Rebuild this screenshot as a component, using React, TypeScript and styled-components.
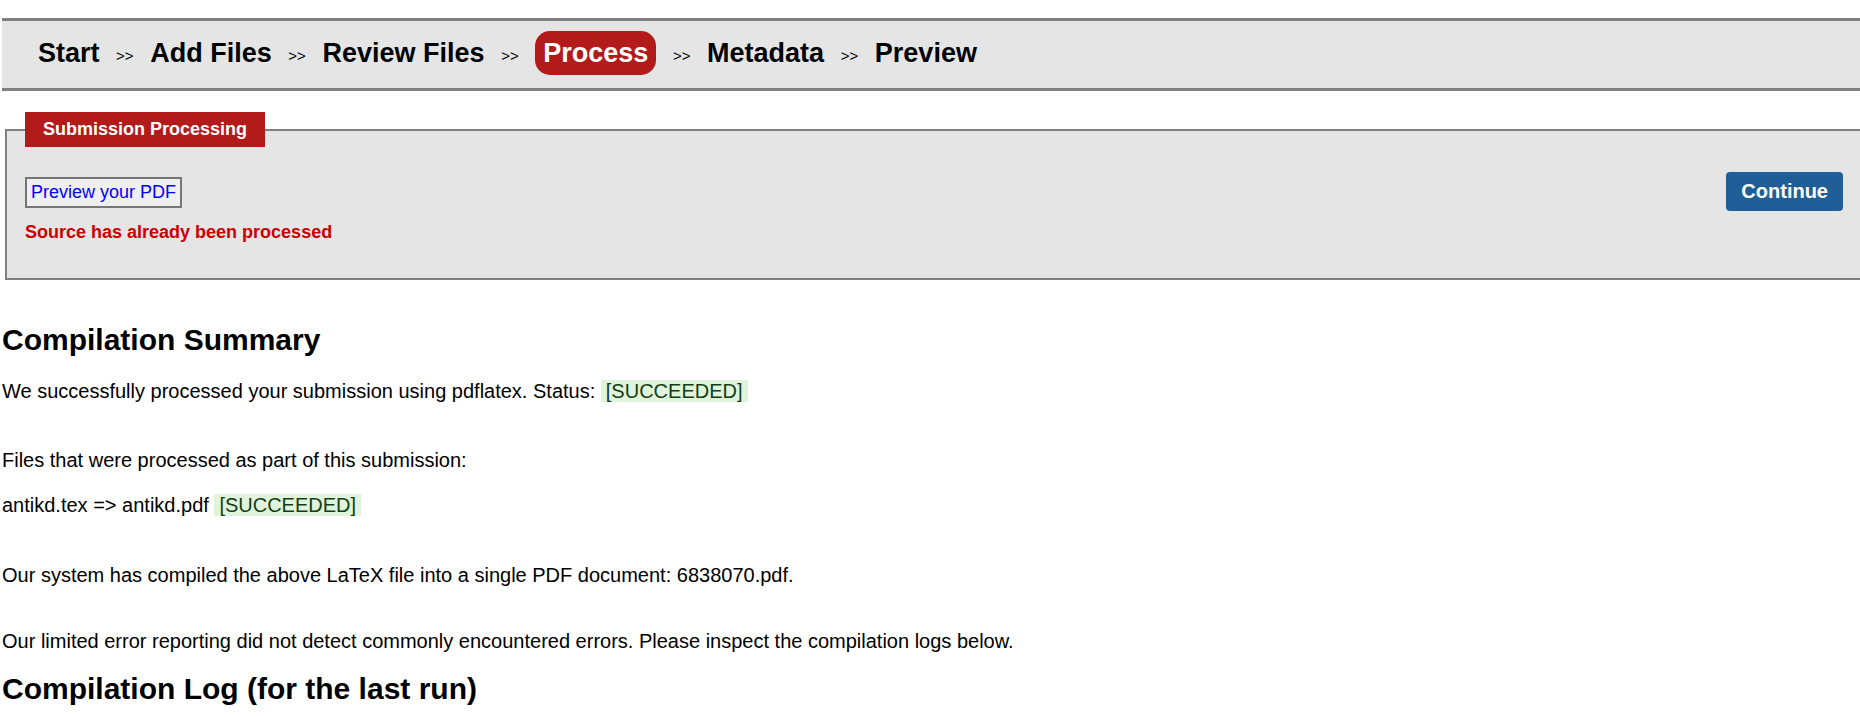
import React from "react";
import styled, { createGlobalStyle, css } from "styled-components";

const GlobalStyle = createGlobalStyle`
  html, body {
    margin: 0;
    padding: 0;
    background: #ffffff;
  }
  body {
    overflow-x: hidden;
    font-family: "Liberation Sans", Arial, sans-serif;
    color: #000000;
  }
  * { box-sizing: border-box; }
`;

const Page = styled.div`
  padding-top: 18px;
  display: flex;
  flex-direction: column;
`;

const Nav = styled.nav`
  margin: 0 -6px 0 2px;
  background: #e5e5e5;
  border-top: 3px solid #808080;
  border-bottom: 3px solid #808080;
  height: 73px;
  padding: 0 0 3px 36px;
  display: flex;
  align-items: center;
  gap: 16.6px;
`;

const NavStep = styled.span<{ $active?: boolean }>`
  font-size: 27px;
  font-weight: bold;
  line-height: 30px;
  color: #000000;
  ${(p) =>
    p.$active &&
    css`
      background: #b31b1b;
      color: #ffffff;
      border-radius: 15px;
      padding: 7px 8px;
    `}
`;

const NavSep = styled.span`
  font-size: 15px;
  line-height: 18px;
  padding-top: 6px;
  color: #000000;
`;

const Panel = styled.fieldset`
  margin: 21px -6px 0 5px;
  background: #e5e5e5;
  border: 2px solid #808080;
  padding: 0 21px 35px 18px;
  min-width: 0;
`;

const PanelLegend = styled.legend`
  background: #b31b1b;
  color: #ffffff;
  font-size: 18px;
  font-weight: bold;
  line-height: 21px;
  padding: 7px 18px 7px 18px;
  margin-left: 0;
`;

const PanelBody = styled.div`
  display: flex;
  justify-content: space-between;
  align-items: flex-start;
  padding-top: 25px;
`;

const PanelLeft = styled.div`
  display: flex;
  flex-direction: column;
  align-items: flex-start;
  padding-top: 5px;
`;

const PreviewButton = styled.button`
  font-family: "Liberation Sans", Arial, sans-serif;
  font-size: 18px;
  line-height: 21px;
  color: #0000ff;
  background: #efefef;
  border: 2px solid #767676;
  padding: 3px 4px 3px 4px;
  cursor: pointer;
`;

const Notice = styled.p`
  margin: 14px 0 0 0;
  color: #cc0000;
  font-size: 18px;
  font-weight: bold;
  line-height: 21px;
`;

const ContinueButton = styled.button`
  font-family: "Liberation Sans", Arial, sans-serif;
  font-size: 20px;
  font-weight: bold;
  line-height: 23px;
  color: #ffffff;
  background: #1f5e96;
  border: none;
  border-radius: 4px;
  padding: 8px 15px;
  cursor: pointer;
`;

const Main = styled.main`
  padding: 0 2px;
  display: flex;
  flex-direction: column;
`;

const SectionTitle = styled.h2<{ $gap: number }>`
  margin: ${(p) => p.$gap}px 0 0 0;
  font-size: 30px;
  font-weight: bold;
  line-height: 34px;
`;

const Para = styled.p<{ $gap: number }>`
  margin: ${(p) => p.$gap}px 0 0 0;
  font-size: 20px;
  line-height: 23px;
`;

const StatusBadge = styled.span`
  background: #e0f4dc;
  color: #133d13;
  padding: 0 5px;
`;

const steps = ["Start", "Add Files", "Review Files", "Process", "Metadata", "Preview"];

export default function App() {
  return (
    <>
      <GlobalStyle />
      <Page>
        <Nav>
          {steps.map((s, i) => (
            <React.Fragment key={s}>
              {i > 0 && <NavSep>&gt;&gt;</NavSep>}
              <NavStep $active={s === "Process"}>{s}</NavStep>
            </React.Fragment>
          ))}
        </Nav>
        <Panel>
          <PanelLegend>Submission Processing</PanelLegend>
          <PanelBody>
            <PanelLeft>
              <PreviewButton>Preview your PDF</PreviewButton>
              <Notice>Source has already been processed</Notice>
            </PanelLeft>
            <ContinueButton>Continue</ContinueButton>
          </PanelBody>
        </Panel>
        <Main>
          <SectionTitle $gap={43}>Compilation Summary</SectionTitle>
          <Para $gap={23}>
            We successfully processed your submission using pdflatex. Status:{" "}
            <StatusBadge>[SUCCEEDED]</StatusBadge>
          </Para>
          <Para $gap={46}>Files that were processed as part of this submission:</Para>
          <Para $gap={22}>
            antikd.tex =&gt; antikd.pdf <StatusBadge>[SUCCEEDED]</StatusBadge>
          </Para>
          <Para $gap={47}>
            Our system has compiled the above LaTeX file into a single PDF document: 6838070.pdf.
          </Para>
          <Para $gap={43}>
            Our limited error reporting did not detect commonly encountered errors. Please inspect the
            compilation logs below.
          </Para>
          <SectionTitle $gap={19}>Compilation Log (for the last run)</SectionTitle>
        </Main>
      </Page>
    </>
  );
}
